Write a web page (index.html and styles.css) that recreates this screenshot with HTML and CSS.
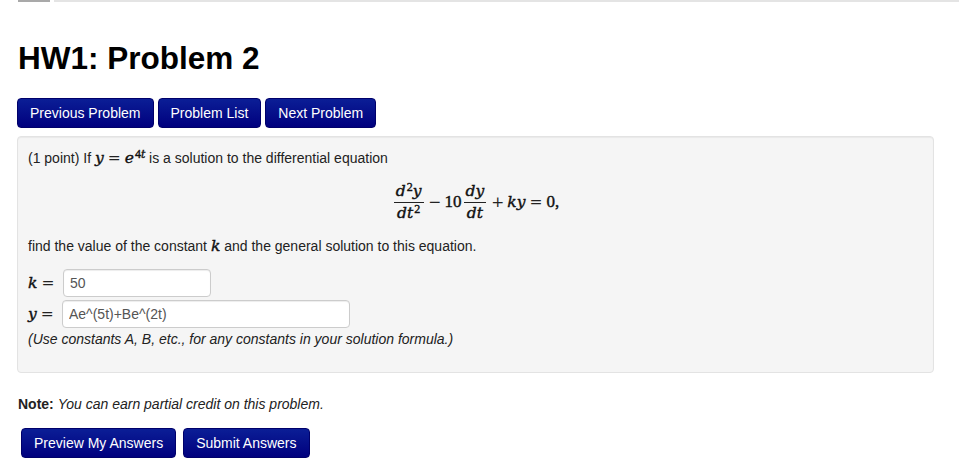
FILE: index.html
```html
<!DOCTYPE html>
<html lang="en">
<head>
<meta charset="utf-8">
<title>HW1: Problem 2</title>
<link rel="stylesheet" href="styles.css">
</head>
<body>
<div class="topbar"><span class="topbar-tab"></span><span class="topbar-rule"></span></div>
<main class="page">
  <h1 class="title">HW1: Problem 2</h1>
  <nav class="probnav">
    <a class="btn" href="#">Previous Problem</a>
    <a class="btn" href="#">Problem List</a>
    <a class="btn" href="#">Next Problem</a>
  </nav>
  <div class="well">
    <p class="line">(1 point) If <span class="math"><i class="mi">y</i><span class="rel">=</span><i class="mi">e</i><sup class="sup"><span class="mn">4</span><i class="mi">t</i></sup></span> is a solution to the differential equation</p>
    <div class="display math">
      <span class="frac"><span class="num"><i class="mi">d</i><sup class="sup"><span class="mn">2</span></sup><i class="mi">y</i></span><span class="den"><i class="mi">d</i><i class="mi">t</i><sup class="sup"><span class="mn">2</span></sup></span></span><span class="bin">−</span><span class="mn">10</span><span class="frac"><span class="num"><i class="mi">d</i><i class="mi">y</i></span><span class="den"><i class="mi">d</i><i class="mi">t</i></span></span><span class="bin">+</span><i class="mi">k</i><i class="mi">y</i><span class="rel">=</span><span class="mn">0,</span>
    </div>
    <p class="line line-find">find the value of the constant <span class="math"><i class="mi">k</i></span> and the general solution to this equation.</p>
    <div class="answers">
      <div class="ans">
        <span class="lbl math"><i class="mi">k</i><span class="rel">=</span></span>
        <input class="inp inp-short" type="text" value="50">
      </div>
      <div class="ans">
        <span class="lbl lbl-y math"><i class="mi">y</i><span class="rel">=</span></span>
        <input class="inp inp-long" type="text" value="Ae^(5t)+Be^(2t)">
      </div>
      <p class="hint">(Use constants A, B, etc., for any constants in your solution formula.)</p>
    </div>
  </div>
  <p class="note"><b>Note:</b> <i>You can earn partial credit on this problem.</i></p>
  <div class="actions">
    <button class="btn" type="button">Preview My Answers</button>
    <button class="btn" type="button">Submit Answers</button>
  </div>
</main>
</body>
</html>
```
FILE: styles.css
```css
* { box-sizing: border-box; }
html, body { margin: 0; padding: 0; background: #fff; }
body {
  width: 959px;
  font-family: "Liberation Sans", Arial, sans-serif;
  font-size: 14px;
  line-height: 20px;
  color: #222;
}
.topbar { display: flex; height: 2px; }
.topbar-tab { margin-left: 18px; width: 32px; background: #a9a9a9; }
.topbar-rule { margin-left: 4px; flex: 1; background: #e4e4e4; }

.page { padding: 0 25px 0 17px; }
.title {
  margin: 39px 0 0 1px;
  font-size: 31.5px;
  line-height: 35px;
  font-weight: bold;
  color: #000;
}
.probnav { display: flex; gap: 4px; margin-top: 22px; }
.btn {
  display: inline-block;
  margin: 0;
  padding: 4px 12px;
  border: 1px solid #00006a;
  border-radius: 4px;
  background: linear-gradient(#0b1e96, #00007e);
  color: #fff;
  font: 14px/20px "Liberation Sans", Arial, sans-serif;
  text-decoration: none;
  cursor: pointer;
}

.well {
  margin-top: 8px;
  padding: 11px 10px 12px;
  background: #f5f5f5;
  border: 1px solid #e3e3e3;
  border-radius: 4px;
  box-shadow: inset 0 1px 1px rgba(0,0,0,.05);
}
.line { margin: 0; }

.math {
  font-family: "DejaVu Serif", "Liberation Serif", serif;
  font-size: 15.5px;
  line-height: 16px;
  color: #111;
}
.mi { font-style: italic; font-weight: normal; -webkit-text-stroke: 0.4px #111; }
.mn { font-family: "Liberation Serif", serif; font-size: 17px; font-weight: normal; -webkit-text-stroke: 0.4px #111; }
.rel { margin: 0 4px; font-weight: normal; color: #222; }
.bin { margin: 0 3px; font-weight: normal; color: #222; }
.sup { font-size: 70%; line-height: 0; vertical-align: 0.5em; margin-left: 1px; }
.sup .mn { font-size: 12px; }

.display {
  display: block;
  margin: 15px 0 14px;
  text-align: center;
  line-height: 20px;
}
.frac {
  display: inline-flex;
  flex-direction: column;
  vertical-align: middle;
  margin: 0 2px;
}
.num, .den { display: block; text-align: center; padding: 0 2px; line-height: 17px; }
.num { padding-bottom: 2px; border-bottom: 1px solid #222; }
.den { padding-top: 2px; }

.answers { margin-top: 13px; }
.ans { display: flex; align-items: center; height: 28px; margin-bottom: 3px; }
.lbl { width: 35px; flex: none; white-space: nowrap; }
.lbl .rel { margin: 0 0 0 4px; }
.lbl-y { width: 34px; }
.inp {
  height: 28px;
  padding: 4px 6px;
  border: 1px solid #ccc;
  border-radius: 4px;
  background: #fff;
  color: #555;
  font: 14px/18px "Liberation Sans", Arial, sans-serif;
  box-shadow: inset 0 1px 1px rgba(0,0,0,.075);
}
.inp-short { width: 148px; }
.inp-long { width: 288px; }
.hint { margin: -2px 0 11px; font-style: italic; }

.note { margin: 21px 0 0 1px; }
.actions { display: flex; gap: 7px; margin: 14px 0 0 4px; }
```
